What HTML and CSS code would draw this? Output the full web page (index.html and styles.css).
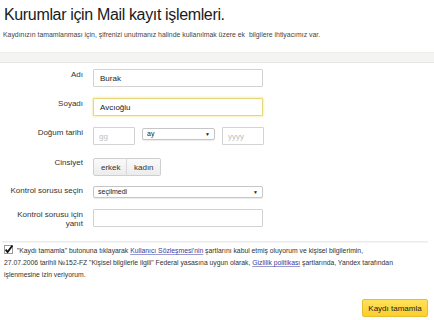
FILE: index.html
```html
<!DOCTYPE html>
<html lang="tr">
<head>
  <meta charset="UTF-8">
  <title>Kurumlar için Mail kayıt işlemleri</title>
  <link rel="stylesheet" href="styles.css">
</head>
<body>
  <h1 class="title">Kurumlar için Mail kayıt işlemleri.</h1>
  <p class="intro">Kaydınızın tamamlanması için, şifrenizi unutmanız halinde kullanılmak üzere ek&nbsp; bilgilere ihtiyacımız var.</p>

  <div class="band"></div>

  <form class="reg-form">
    <div class="row">
      <label class="row-label" for="name">Adı</label>
      <input class="field" type="text" id="name" value="Burak">
    </div>
    <div class="row">
      <label class="row-label" for="surname">Soyadı</label>
      <input class="field field-active" type="text" id="surname" value="Avcıoğlu">
    </div>
    <div class="row row-date">
      <label class="row-label" for="day">Doğum tarihi</label>
      <div class="date-group">
        <input class="field field-short" type="text" id="day" placeholder="gg">
        <span class="select-wrap select-month">
          <select class="select">
            <option>ay</option>
          </select>
        </span>
        <input class="field field-short" type="text" placeholder="yyyy">
      </div>
    </div>
    <div class="row row-gender">
      <span class="row-label">Cinsiyet</span>
      <div class="toggle">
        <button type="button" class="toggle-btn">erkek</button>
        <button type="button" class="toggle-btn">kadın</button>
      </div>
    </div>
    <div class="row row-question">
      <label class="row-label" for="question">Kontrol sorusu seçin</label>
      <span class="select-wrap select-full">
        <select class="select" id="question">
          <option>seçilmedi</option>
        </select>
      </span>
    </div>
    <div class="row">
      <label class="row-label" for="answer">Kontrol sorusu için yanıt</label>
      <input class="field" type="text" id="answer">
    </div>
  </form>

  <p class="terms">
    <span class="check">
      <svg width="9" height="9" viewBox="0 0 9 9">
        <rect x="0.5" y="0.5" width="8" height="8" fill="#fff" stroke="#9a9a9a"/>
        <path d="M1.6 4.6 L3.6 7 L8.4 0.6" fill="none" stroke="#111" stroke-width="1.8"/>
      </svg>
    </span>
    "Kaydı tamamla" butonuna tıklayarak <a href="#">Kullanıcı Sözleşmesi'nin</a> şartlarını kabul etmiş oluyorum ve kişisel bilgilerimin,<br>
    27.07.2006 tarihli №152-FZ "Kişisel bilgilerle ilgili" Federal yasasına uygun olarak, <a href="#">Gizlilik politikası</a> şartlarında, Yandex tarafından<br>
    işlenmesine izin veriyorum.
  </p>

  <div class="actions">
    <button type="submit" class="submit-btn">Kaydı tamamla</button>
  </div>
</body>
</html>
```

FILE: styles.css
```css
body {
  margin: 0;
  font-family: "Liberation Sans", Arial, sans-serif;
  color: #333;
  background: #fff;
}

.title {
  margin: 0;
  padding: 3px 0 0 4px;
  font-size: 16px;
  font-weight: normal;
  line-height: 24px;
  letter-spacing: -0.35px;
  color: #1a1a1a;
}

.intro {
  margin: 3px 0 0;
  padding-left: 3px;
  font-size: 6.9px;
  line-height: 10px;
  color: #444;
}

.band {
  margin-top: 12px;
  height: 9px;
  background: #f4f4f3;
  border-top: 1px solid #ededed;
  border-bottom: 1px solid #e6e6e6;
}

.reg-form {
  margin: 0 6px 0 2px;
  padding: 6px 0 13px;
  border-bottom: 1px solid #ececec;
  box-shadow: 0 1px 1px rgba(0,0,0,0.04);
}

.row {
  display: flex;
  align-items: flex-start;
  margin-bottom: 11px;
}

.row:last-child {
  margin-bottom: 0;
}

.row-date {
  margin-bottom: 13px;
}

.row-gender {
  margin-bottom: 10px;
}

.row-label {
  flex: 0 0 81px;
  padding: 1px 10px 0 0;
  text-align: right;
  font-size: 8px;
  line-height: 9px;
  color: #333;
}

.row-gender .row-label,
.row-question .row-label {
  padding-top: 0;
}

.field {
  width: 170px;
  height: 18px;
  margin: 0;
  padding: 0 6px;
  box-sizing: border-box;
  border: 1px solid #d3d3d3;
  border-radius: 1px;
  font-family: inherit;
  font-size: 8px;
  color: #222;
  background: #fff;
  outline: none;
}

.field::placeholder {
  color: #bdbdbd;
}

.field-active {
  border-color: #e6d77a;
  box-shadow: 0 0 2px 1px rgba(240,220,110,0.45);
}

.date-group {
  display: flex;
  align-items: flex-start;
  gap: 7px;
}

.field-short {
  width: 42px;
  padding: 0 5px;
}

.select-wrap {
  position: relative;
  display: block;
}

.select-wrap::after {
  content: "\25BC";
  position: absolute;
  right: 5px;
  top: 3px;
  font-size: 5px;
  line-height: 6px;
  color: #222;
  pointer-events: none;
}

.select-month {
  width: 73px;
  margin-top: 1px;
}

.select-full {
  width: 170px;
}

.select {
  display: block;
  width: 100%;
  height: 12px;
  margin: 0;
  padding: 0 0 0 4px;
  box-sizing: border-box;
  -webkit-appearance: none;
  appearance: none;
  border: 1px solid #c6c6c6;
  border-radius: 2px;
  background: #fff;
  box-shadow: 0 1px 1px rgba(0,0,0,0.08);
  font-family: inherit;
  font-size: 7px;
  line-height: 10px;
  color: #222;
}

.toggle {
  display: flex;
}

.toggle-btn {
  height: 18px;
  margin: 0;
  padding: 0 7px;
  border: 1px solid #cfcfcf;
  background: linear-gradient(#fafafa, #ececec);
  font-family: inherit;
  font-size: 8px;
  color: #333;
}

.toggle-btn:first-child {
  width: 34px;
  border-radius: 2px 0 0 2px;
}

.toggle-btn + .toggle-btn {
  width: 35px;
  border-left: 1px solid #d8d8d8;
  border-radius: 0 2px 2px 0;
  margin-left: -1px;
}

.terms {
  margin: 3px 0 0;
  padding: 0 4px;
  font-size: 6.8px;
  line-height: 12px;
  color: #333;
}

.check {
  display: inline-block;
  width: 9px;
  height: 9px;
  margin-right: 2px;
  vertical-align: -1px;
}

.check svg {
  display: block;
}

.terms a {
  color: #3a3aa0;
  text-decoration: underline;
  text-decoration-color: #9a9ad0;
}

.actions {
  display: flex;
  justify-content: flex-end;
  padding: 18px 6px 0;
}

.submit-btn {
  width: 66px;
  height: 18px;
  padding: 0;
  border: 1px solid #e6be2e;
  border-radius: 2px;
  background: linear-gradient(#ffe15a, #fbcf2c);
  font-family: inherit;
  font-size: 8px;
  color: #222;
}
```
